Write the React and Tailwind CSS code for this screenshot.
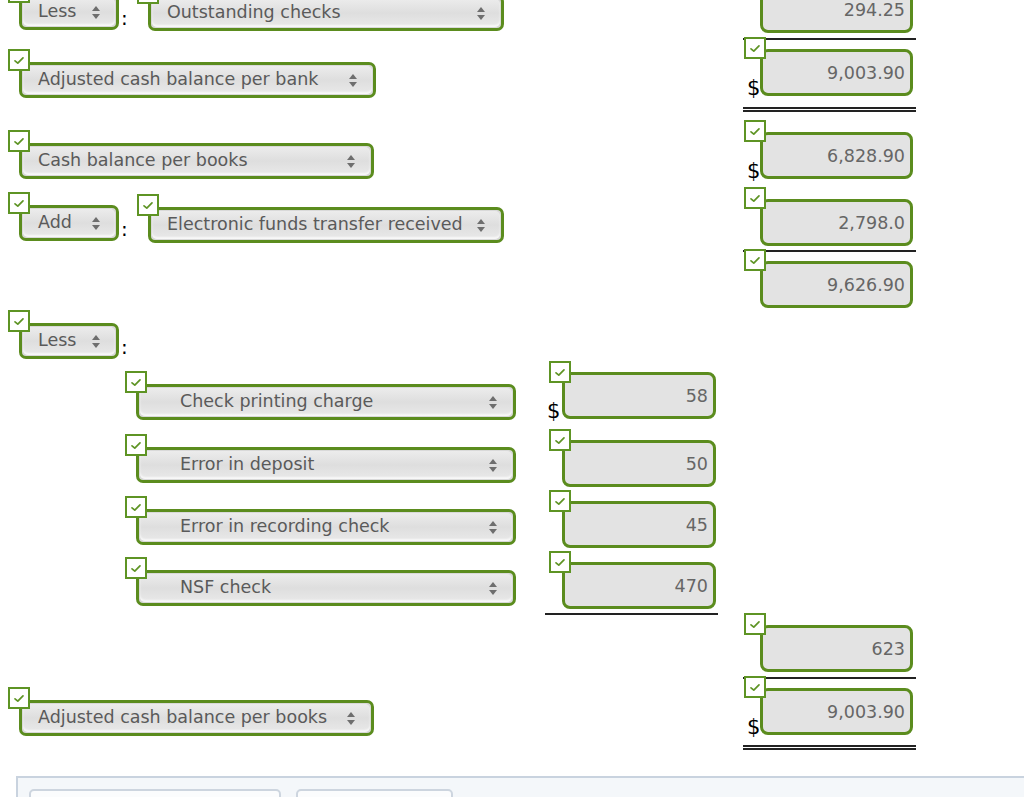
import React from "react";

const Check = ({ className }) => (
  <span
    className={`absolute z-10 flex h-[22px] w-[22px] items-center justify-center border-2 border-[#5e9424] bg-white ${className}`}
  >
    <svg width="14" height="14" viewBox="0 0 14 14">
      <path
        d="M3 7.8 L5.8 10.2 L11 4.8"
        fill="none"
        stroke="#5e9424"
        strokeWidth="1.7"
        strokeLinecap="round"
        strokeLinejoin="round"
      />
    </svg>
  </span>
);

const Arrows = () => (
  <svg width="8" height="13" viewBox="0 0 8 13">
    <polygon points="4,0 8,5 0,5" fill="#6e6e6e" />
    <polygon points="0,8 8,8 4,13" fill="#6e6e6e" />
  </svg>
);

const Select = ({ label, width, indent = false, className = "" }) => (
  <div className={`relative shrink-0 ${width} ${className}`}>
    <Check className="-left-[11px] -top-[13px]" />
    <div className="h-[36px] rounded-[7px] border-[3px] border-[#5b8c1e] bg-[#d9d9d9] p-[1px]">
      <div
        className={`flex h-full items-center justify-between rounded-[5px] bg-linear-to-b from-[#ececec] via-[#dedede] to-[#e9e9e9] pr-[15px] text-[17.5px] text-[#5a5a5a] shadow-[inset_0_-2px_2px_rgba(255,255,255,0.7)] ${
          indent ? "pl-[40px]" : "pl-[15px]"
        }`}
      >
        <span className="mt-[-1px] whitespace-nowrap">{label}</span>
        <Arrows />
      </div>
    </div>
  </div>
);

const Colon = () => (
  <span className="mb-[2px] w-[29px] pl-[2px] text-[20px] leading-none text-black">:</span>
);

const Amount = ({ value, dollar = false, mid = false }) => (
  <div className="flex items-end">
    <span
      className={`mb-[-3px] w-[17px] text-[21px] leading-none text-black ${
        mid ? "pl-[2px]" : "pl-[4px]"
      }`}
    >
      {dollar ? "$" : ""}
    </span>
    <div className="relative">
      <Check className={mid ? "-left-[13px] -top-[11px]" : "-left-[16px] -top-[12px]"} />
      <div
        className={`flex h-[47px] items-center justify-end rounded-[8px] border-[3px] border-[#5b8c1e] bg-[#e3e3e3] pr-[5px] pt-[2px] text-[17.5px] text-[#666] ${
          mid ? "w-[154px]" : "w-[153px]"
        }`}
      >
        {value}
      </div>
    </div>
  </div>
);

const Row = ({ h, children }) => (
  <div className={`grid grid-cols-[520px_173px_173px] gap-x-[25px] ${h}`}>{children}</div>
);

export default function App() {
  return (
    <div className="min-h-screen overflow-hidden bg-white font-['DejaVu_Sans',Verdana,sans-serif]">
      <div className="-mt-[14px]">
        <Row h="h-[54px]">
          <div className="flex items-start pl-[19px] pt-[8px]">
            <div className="flex items-end">
              <Select label="Less" width="w-[100px]" />
              <Colon />
            </div>
            <Select label="Outstanding checks" width="w-[356px]" className="mt-[1px]" />
          </div>
          <div />
          <div className="border-b-2 border-[#222]">
            <Amount value="294.25" />
          </div>
        </Row>

        <Row h="h-[72px]">
          <div className="pl-[19px] pt-[22px]">
            <Select label="Adjusted cash balance per bank" width="w-[357px]" />
          </div>
          <div />
          <div className="border-b-[5px] border-double border-[#222] pt-[9px]">
            <Amount value="9,003.90" dollar />
          </div>
        </Row>

        <Row h="h-[78px]">
          <div className="pl-[19px] pt-[31px]">
            <Select label="Cash balance per books" width="w-[355px]" />
          </div>
          <div />
          <div className="pt-[20px]">
            <Amount value="6,828.90" dollar />
          </div>
        </Row>

        <Row h="h-[62px]">
          <div className="flex items-start pl-[19px] pt-[15px]">
            <div className="flex items-end">
              <Select label="Add" width="w-[100px]" />
              <Colon />
            </div>
            <Select label="Electronic funds transfer received" width="w-[356px]" className="mt-[2px]" />
          </div>
          <div />
          <div className="border-b-2 border-[#222] pt-[9px]">
            <Amount value="2,798.0" />
          </div>
        </Row>

        <Row h="h-[60px]">
          <div />
          <div />
          <div className="pt-[9px]">
            <Amount value="9,626.90" />
          </div>
        </Row>

        <Row h="h-[54px]">
          <div className="flex items-end self-start pl-[19px] pt-[11px]">
            <Select label="Less" width="w-[100px]" />
            <Colon />
          </div>
          <div />
          <div />
        </Row>

        <Row h="h-[62px]">
          <div className="pl-[136px] pt-[18px]">
            <Select label="Check printing charge" width="w-[380px]" indent />
          </div>
          <div className="pt-[6px]">
            <Amount value="58" dollar mid />
          </div>
          <div />
        </Row>

        <Row h="h-[62px]">
          <div className="pl-[136px] pt-[19px]">
            <Select label="Error in deposit" width="w-[380px]" indent />
          </div>
          <div className="pt-[12px]">
            <Amount value="50" mid />
          </div>
          <div />
        </Row>

        <Row h="h-[62px]">
          <div className="pl-[136px] pt-[19px]">
            <Select label="Error in recording check" width="w-[380px]" indent />
          </div>
          <div className="pt-[11px]">
            <Amount value="45" mid />
          </div>
          <div />
        </Row>

        <Row h="h-[63px]">
          <div className="pl-[136px] pt-[18px]">
            <Select label="NSF check" width="w-[380px]" indent />
          </div>
          <div className="border-b-2 border-[#222] pt-[10px]">
            <Amount value="470" mid />
          </div>
          <div />
        </Row>

        <Row h="h-[64px]">
          <div />
          <div />
          <div className="border-b-2 border-[#222] pt-[10px]">
            <Amount value="623" />
          </div>
        </Row>

        <Row h="h-[71px]">
          <div className="pl-[19px] pt-[21px]">
            <Select label="Adjusted cash balance per books" width="w-[355px]" />
          </div>
          <div />
          <div className="border-b-[5px] border-double border-[#222] pt-[9px]">
            <Amount value="9,003.90" dollar />
          </div>
        </Row>
      </div>

      <div className="ml-[16px] mt-[26px] flex h-[60px] gap-[15px] border-l-2 border-t-2 border-[#c9d3df] bg-[#f4f7fa] pl-[11px] pt-[11px]">
        <div className="h-[40px] w-[252px] rounded-t-[5px] border-2 border-[#cdd5df] bg-[#fbfcfd]" />
        <div className="h-[40px] w-[157px] rounded-t-[5px] border-2 border-[#cdd5df] bg-[#fbfcfd]" />
      </div>
    </div>
  );
}
